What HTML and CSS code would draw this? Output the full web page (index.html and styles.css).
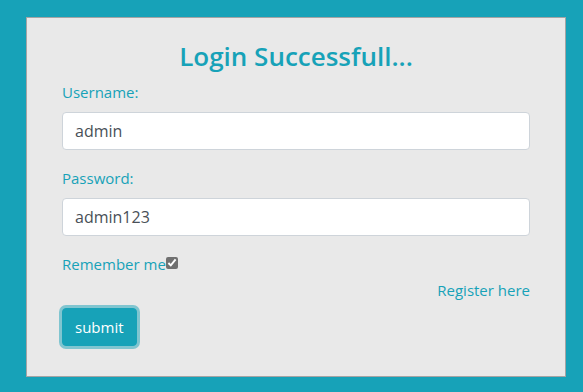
FILE: index.html
```html
<!DOCTYPE html>
<html lang="en">

<head>
    <meta charset="UTF-8">
    <meta name="viewport" content="width=device-width, initial-scale=1.0">
    <title>Login</title>
    <link rel="stylesheet" href="styles.css">
</head>

<body>
    <div class="container">
        <h2>Login Successfull...</h2>
        <form id="loginForm">
            <div class="form-group">
                <label for="username">Username:</label>
                <input type="text" id="username" class="form-control" value="admin">
            </div>
            <div class="form-group">
                <label for="password">Password:</label>
                <input type="text" id="password" class="form-control" value="admin123">
            </div>
            <div class="remember">
                <label for="remember">Remember me</label><input type="checkbox" id="remember" checked>
            </div>
            <div class="register">
                <a href="#">Register here</a>
            </div>
            <button type="submit" class="btn">submit</button>
        </form>
    </div>
</body>

</html>
```

FILE: styles.css
```css
:root {
    --main-color: #17a2b8;
    --card-bg: #e9e9e9;
    --card-border: #a4a4a4;
    --input-border: #ced4da;
    --input-text: #495057;
}

body {
    font-family: "Open Sans", sans-serif;
    margin: 0;
    padding: 17px 0 0 26px;
    min-height: 392px;
    box-sizing: border-box;
    background-color: var(--main-color);
    color: var(--main-color);
}

.container {
    background-color: var(--card-bg);
    border: 1px solid var(--card-border);
    width: 540px;
    height: 360px;
    box-sizing: border-box;
    padding: 23px 35px 0 35px;
}

h2 {
    text-align: center;
    font-size: 26px;
    font-weight: 600;
    line-height: 31px;
    margin: 0 0 8px 0;
}

label {
    display: inline-block;
    font-size: 15px;
    line-height: 24px;
    margin-bottom: 8px;
}

.form-group {
    margin-bottom: 16px;
}

.form-control {
    display: block;
    width: 100%;
    height: 38px;
    padding: 6px 12px;
    font-family: inherit;
    font-size: 16px;
    color: var(--input-text);
    background-color: #fff;
    border: 1px solid var(--input-border);
    border-radius: 4px;
    box-sizing: border-box;
}

.remember label {
    margin-bottom: 0;
}

.remember input {
    margin: 0;
    width: 12px;
    height: 12px;
    accent-color: #707070;
    vertical-align: 1px;
}

.register {
    text-align: right;
    font-size: 15px;
    line-height: 24px;
    margin: 2px 0 6px 0;
}

.register a {
    color: var(--main-color);
    text-decoration: none;
}

.btn {
    font-family: inherit;
    font-size: 15px;
    line-height: 24px;
    padding: 6px 12px;
    color: #fff;
    background-color: var(--main-color);
    border: 1px solid var(--main-color);
    border-radius: 4px;
    box-shadow: 0 0 0 3px rgba(23, 162, 184, 0.5);
    cursor: pointer;
}
```
